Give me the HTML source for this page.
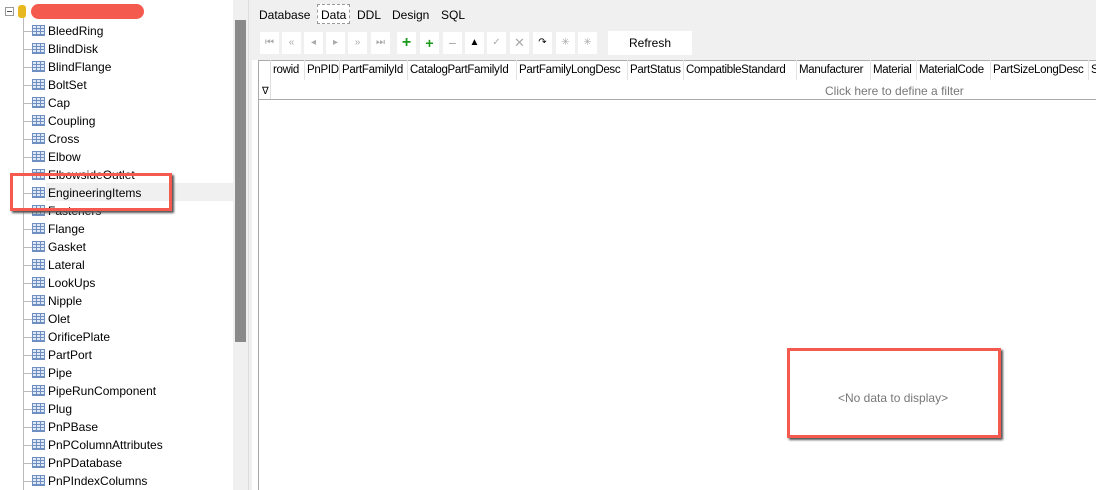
<!DOCTYPE html>
<html><head><style>
*{margin:0;padding:0;box-sizing:border-box}
body{width:1096px;height:490px;overflow:hidden;background:#fff;font-family:"Liberation Sans",sans-serif;font-size:12px;color:#000;position:relative}
.a{position:absolute;white-space:nowrap}
.row{position:absolute;left:32px;height:18px;line-height:18px}
.ic{position:absolute;left:0;top:3px;width:13px;height:11px;border:1px solid #6f8fc0;background:repeating-linear-gradient(#dfe8f6 0 2px,#6f8fc0 2px 3px)}
.ic:after{content:"";position:absolute;left:3px;top:0;bottom:0;width:1px;background:#6f8fc0;box-shadow:4px 0 #6f8fc0}
.row span{position:absolute;left:16px}
.hl{position:absolute;left:24px;width:8px;border-top:1px solid #bbb}
.tb{position:absolute;top:31px;width:21px;height:24px;background:#fff;border:1px solid #f0f0f0;color:#aaa;font-size:10px;text-align:center;line-height:22px}
.h{position:absolute;top:60px;height:20px;line-height:20px;border-right:1px solid #e4e4e4;overflow:hidden;padding-left:2px;font-size:11.5px;letter-spacing:-0.3px}
</style></head><body>
<div class="a" style="left:5px;top:7px;width:9px;height:9px;border:1px solid #999;background:#fff"></div>
<div class="a" style="left:7px;top:11px;width:5px;height:1px;background:#555"></div>
<div class="a" style="left:18px;top:5px;width:8px;height:13px;background:#e8b820;border-radius:3px"></div>
<div class="a" style="left:31px;top:4px;width:113px;height:15px;background:#f55a4e;border-radius:8px"></div>
<div class="a" style="left:23px;top:18px;width:1px;height:472px;background:#bbb"></div>
<div class="a" style="left:46px;top:183px;width:187px;height:18px;background:#f0f0f0"></div>
<div id="tree"></div>
<div class="a" style="left:233px;top:0;width:15px;height:490px;background:#f0f0f0"></div>
<div class="a" style="left:235px;top:20px;width:11px;height:322px;background:#8a8a8a"></div>
<div class="a" style="left:248px;top:0;width:4px;height:490px;background:#f0f0f0;border-left:1px solid #ddd"></div>
<div class="a" style="left:10px;top:173px;width:162px;height:38px;border:3px solid #f55a4e;box-shadow:2px 2px 2px #555"></div>
<div class="a" style="left:252px;top:0;width:844px;height:60px;background:#f0f0f0"></div>
<div class="a" style="left:259px;top:8px">Database</div>
<div class="a" style="left:317px;top:4px;width:33px;height:20px;border:1px dashed #999;background:#fff"></div>
<div class="a" style="left:321px;top:8px">Data</div>
<div class="a" style="left:357px;top:8px">DDL</div>
<div class="a" style="left:392px;top:8px">Design</div>
<div class="a" style="left:441px;top:8px">SQL</div>
<div class="tb" style="left:259px">⏮</div><div class="tb" style="left:281px">«</div><div class="tb" style="left:303px">◂</div><div class="tb" style="left:325px">▸</div><div class="tb" style="left:347px">»</div><div class="tb" style="left:370px">⏭</div>
<div class="tb" style="left:396px;color:#1a9a1a;font-size:16px;font-weight:bold">+</div>
<div class="tb" style="left:419px;color:#1a9a1a;font-size:14px;font-weight:bold">+</div>
<div class="tb" style="left:442px;font-size:14px">−</div>
<div class="tb" style="left:464px;color:#000">▲</div>
<div class="tb" style="left:486px">✓</div><div class="tb" style="left:509px;font-size:13px">✕</div>
<div class="tb" style="left:532px;color:#000">↷</div><div class="tb" style="left:555px">✳</div><div class="tb" style="left:577px">✳</div>
<div class="a" style="left:608px;top:31px;width:84px;height:24px;background:#fff;text-align:center;line-height:24px;font-size:12px">Refresh</div>
<div class="a" style="left:258px;top:60px;width:838px;height:430px;border-left:1px solid #aaa;border-top:1px solid #aaa"></div>
<div class="a" style="left:270px;top:60px;width:1px;height:40px;background:#ddd"></div>
<div class="h" style="left:271px;width:34px">rowid</div>
<div class="h" style="left:305px;width:35px">PnPID</div>
<div class="h" style="left:340px;width:68px">PartFamilyId</div>
<div class="h" style="left:408px;width:109px">CatalogPartFamilyId</div>
<div class="h" style="left:517px;width:111px">PartFamilyLongDesc</div>
<div class="h" style="left:628px;width:56px">PartStatus</div>
<div class="h" style="left:684px;width:113px">CompatibleStandard</div>
<div class="h" style="left:797px;width:74px">Manufacturer</div>
<div class="h" style="left:871px;width:46px">Material</div>
<div class="h" style="left:917px;width:74px">MaterialCode</div>
<div class="h" style="left:991px;width:98px">PartSizeLongDesc</div>
<div class="h" style="left:1089px;width:20px">S</div>
<div class="a" style="left:262px;top:86px;font-size:10px">∇</div>
<div class="a" style="left:825px;top:84px;color:#777">Click here to define a filter</div>
<div class="a" style="left:258px;top:99px;width:838px;height:1px;background:#aaa"></div>
<div class="a" style="left:838px;top:391px;color:#777">&lt;No data to display&gt;</div>
<div class="a" style="left:787px;top:348px;width:214px;height:90px;border:3px solid #f55a4e;box-shadow:2px 2px 2px #555"></div>
<script>
var n=["BleedRing","BlindDisk","BlindFlange","BoltSet","Cap","Coupling","Cross","Elbow","ElbowsideOutlet","EngineeringItems","Fasteners","Flange","Gasket","Lateral","LookUps","Nipple","Olet","OrificePlate","PartPort","Pipe","PipeRunComponent","Plug","PnPBase","PnPColumnAttributes","PnPDatabase","PnPIndexColumns"],h="";
n.forEach(function(t,i){var y=22+i*18;h+='<div class="hl" style="top:'+(y+9)+'px"></div><div class="row" style="top:'+y+'px"><div class="ic"></div><span>'+t+'</span></div>';});
document.getElementById("tree").innerHTML=h;
</script>
</body></html>
